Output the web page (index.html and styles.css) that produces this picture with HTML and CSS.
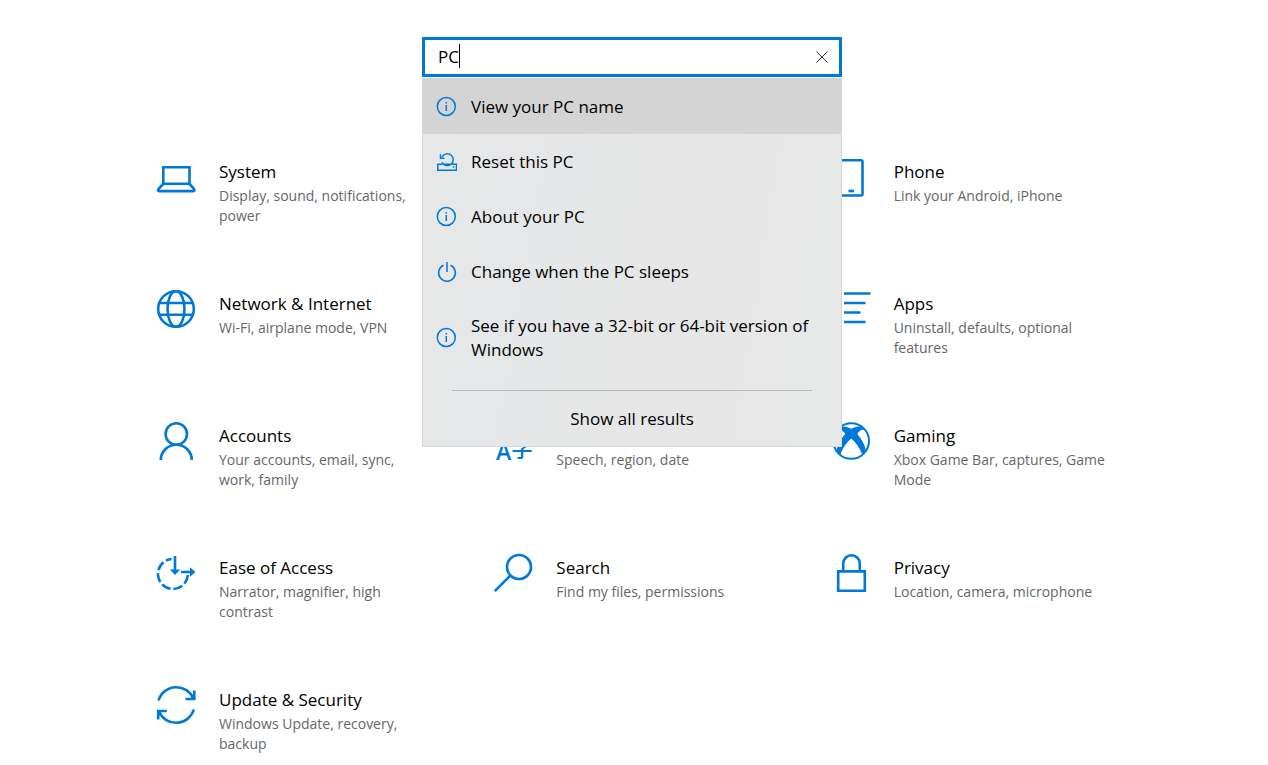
FILE: index.html
```
<!DOCTYPE html>
<html lang="en">
<head>
  <meta charset="UTF-8">
  <meta name="viewport" content="width=device-width, initial-scale=1">
  <title>Settings</title>
  <link rel="stylesheet" href="styles.css">
</head>
<body>

  <!-- shared icon for the info results -->
  <svg class="sprite" aria-hidden="true">
    <symbol id="info" viewBox="0 0 22 22">
      <circle cx="11.300" cy="10.500" r="9"/>
      <path d="M11.300 9v6M11.300 6v1.500"/>
    </symbol>
  </svg>

  <header class="search">
    <form class="search-box" role="search">
      <input class="search-input" type="text" value="PC" aria-label="Find a setting" autocomplete="off">
      <span class="caret"></span>
      <button class="clear" type="reset" aria-label="Clear">
        <svg viewBox="0 0 12 12"><path d="M0.5 0.5l11 11M11.5 0.5l-11 11"/></svg>
      </button>
    </form>

    <div class="results">
      <ul class="result-list">
        <li><button class="result selected" type="button">
          <svg class="result-icon"><use href="#info"/></svg>
          <span>View your PC name</span>
        </button></li>
        <li><button class="result" type="button">
          <svg class="result-icon" viewBox="0 0 22 22">
            <path d="M7.500 13.300H2.800v6h18.700v-6h-4.700M17.800 16h1.500"/>
            <path d="M7 11.200A5.900 5.900 0 1 0 7.200 5.800M5.500 3.300v3.900h4M8.500 13.300h8"/>
          </svg>
          <span>Reset this PC</span>
        </button></li>
        <li><button class="result" type="button">
          <svg class="result-icon"><use href="#info"/></svg>
          <span>About your PC</span>
        </button></li>
        <li><button class="result" type="button">
          <svg class="result-icon" viewBox="0 0 22 22">
            <path d="M8.500 4.200A8.400 8.400 0 1 0 15.500 4.200M12 1v10"/>
          </svg>
          <span>Change when the PC sleeps</span>
        </button></li>
        <li><button class="result" type="button">
          <svg class="result-icon"><use href="#info"/></svg>
          <span>See if you have a 32-bit or 64-bit version of Windows</span>
        </button></li>
      </ul>
      <button class="show-all" type="button">Show all results</button>
    </div>
  </header>

  <main class="categories">
    <a class="tile" href="#system">
      <svg class="icon" viewBox="0 0 38 38">
        <path d="M6.3 26V9.2h26.2V26M6.3 25.8h26.2l4.6 5.4c.8 1 .3 1.9-.8 1.9H2.2c-1.100 0-1.600-.9-.8-1.900z"/>
      </svg>
      <span class="text"><span class="title">System</span><span class="desc">Display, sound, notifications, power</span></span>
    </a>
    <a class="tile" href="#devices">
      <svg class="icon" viewBox="0 0 38 38">
        <path d="M2 10h20v22H2zM6 15h12M28 12h8v20h-8z"/>
      </svg>
      <span class="text"><span class="title">Devices</span><span class="desc">Bluetooth, printers, mouse</span></span>
    </a>
    <a class="tile" href="#phone">
      <svg class="icon" viewBox="0 0 38 38">
        <rect x="8.500" y="2.300" width="22" height="35.200" rx="1.500"/>
        <path d="M16.500 33h5.500"/>
      </svg>
      <span class="text"><span class="title">Phone</span><span class="desc">Link your Android, iPhone</span></span>
    </a>

    <a class="tile" href="#network">
      <svg class="icon" viewBox="0 0 38 38">
        <circle cx="19" cy="19" r="17.800"/>
        <ellipse cx="19" cy="19" rx="8.500" ry="17.800"/>
        <path d="M2.500 13h33M2.500 24.700h33"/>
      </svg>
      <span class="text"><span class="title">Network &amp; Internet</span><span class="desc">Wi-Fi, airplane mode, VPN</span></span>
    </a>
    <a class="tile" href="#personalization">
      <svg class="icon" viewBox="0 0 38 38">
        <path d="M35 3L16 22l-5-5M11 22c-6 0-6 8-10 11 7 3 15 0 15-7z"/>
      </svg>
      <span class="text"><span class="title">Personalization</span><span class="desc">Background, lock screen, colors</span></span>
    </a>
    <a class="tile" href="#apps">
      <svg class="icon" viewBox="0 0 38 38">
        <path d="M12 3.500h26.500M12 13h21.500M12 22.500h16.500M12 32h21.500M4 3.500h4M4 13h4M4 22.500h4M4 32h4"/>
      </svg>
      <span class="text"><span class="title">Apps</span><span class="desc">Uninstall, defaults, optional features</span></span>
    </a>

    <a class="tile" href="#accounts">
      <svg class="icon" viewBox="0 0 38 38">
        <circle cx="19.300" cy="12" r="10.700"/>
        <path d="M3.800 38a15.500 15.200 0 0 1 31 0"/>
      </svg>
      <span class="text"><span class="title">Accounts</span><span class="desc">Your accounts, email, sync, work, family</span></span>
    </a>
    <a class="tile" href="#time">
      <svg class="icon icon-text" viewBox="0 0 38 38">
        <text x="2" y="38" font-size="23">A</text>
        <text class="cjk" x="17" y="34" font-size="22">字</text>
      </svg>
      <span class="text"><span class="title">Time &amp; Language</span><span class="desc">Speech, region, date</span></span>
    </a>
    <a class="tile" href="#gaming">
      <svg class="icon" viewBox="0 0 38 38">
        <circle cx="19.200" cy="19" r="17.800" stroke-width="2"/>
        <path class="solid" d="M7 6C11 3.200 15.500 4.500 19.200 6.800 23 4.500 27.500 3.200 31.500 6L32 8C29.500 7.200 27 9.200 25.300 12 29.500 17 33.500 23.500 34 29.500L30.500 33C28 26.500 24 20.500 19.200 16.500 14.500 20.500 10.500 26.500 8 33L4.500 29.500C5 23.500 9 17 13.200 12 11.500 9.200 9 7.200 6.500 8z"/>
      </svg>
      <span class="text"><span class="title">Gaming</span><span class="desc">Xbox Game Bar, captures, Game Mode</span></span>
    </a>

    <a class="tile" href="#ease">
      <svg class="icon" viewBox="0 0 38 38">
        <path stroke-dasharray="9.500 2.900" d="M30.900 21A15 15 0 1 1 14.500 5"/>
        <path d="M18 2v14M24 18h10"/>
        <path class="solid" d="M12.800 15.500h10.400L18 21zM33 13.200v9.600L38.500 18z"/>
      </svg>
      <span class="text"><span class="title">Ease of Access</span><span class="desc">Narrator, magnifier, high contrast</span></span>
    </a>
    <a class="tile" href="#search">
      <svg class="icon" viewBox="0 0 38 38">
        <circle cx="25" cy="13" r="12"/>
        <path d="M16.500 21.500L.8 37.200"/>
      </svg>
      <span class="text"><span class="title">Search</span><span class="desc">Find my files, permissions</span></span>
    </a>
    <a class="tile" href="#privacy">
      <svg class="icon" viewBox="0 0 38 38">
        <path d="M6.200 17.400h26.600v19.300H6.200zM11.200 17.400V9.600a8.300 8.300 0 0 1 16.600 0v7.800"/>
      </svg>
      <span class="text"><span class="title">Privacy</span><span class="desc">Location, camera, microphone</span></span>
    </a>

    <a class="tile" href="#update">
      <svg class="icon" viewBox="0 0 38 38">
        <path d="M1.500 14.500A18.500 18.500 0 0 1 36.500 13M37.300 4.500V13H28.500"/>
        <path d="M36.800 23.500A18.500 18.500 0 0 1 1.800 25M1.200 33.500V25H9.800"/>
      </svg>
      <span class="text"><span class="title">Update &amp; Security</span><span class="desc">Windows Update, recovery, backup</span></span>
    </a>
  </main>

</body>
</html>
```
FILE: styles.css
```
* {
  box-sizing: border-box;
}

body {
  margin: 0;
  padding: 37px 4px 0 0;
  background-color: #ffffff;
  color: #000000;
  font-family: "Segoe UI", "Open Sans", "Noto Sans", sans-serif;
  font-size: 17px;
  line-height: 24px;
}

button,
input {
  font: inherit;
  color: inherit;
}

button {
  border: none;
  background: none;
  cursor: pointer;
}

svg {
  fill: none;
  stroke: #0078d7;
}

.sprite {
  display: none;
}

/* search */
.search {
  position: relative;
  z-index: 1;
  max-width: 420px;
  margin: 0 auto;
}

.search-box {
  position: relative;
  display: flex;
  align-items: center;
  height: 40px;
  border: 3px solid #0078d7;
  background-color: #ffffff;
}

.search-input {
  flex: 1;
  min-width: 0;
  padding: 0 0 0 13px;
  border: none;
  outline: none;
  background: none;
}

.caret {
  position: absolute;
  left: 34px;
  top: 4px;
  width: 1px;
  height: 24px;
  background-color: #000000;
}

.clear {
  display: flex;
  align-items: center;
  justify-content: center;
  width: 34px;
  height: 34px;
  padding: 0;
}

.clear svg {
  width: 12px;
  height: 12px;
  stroke: #333333;
}

/* results cover the tiles below */
.results {
  position: absolute;
  top: 100%;
  left: 0;
  right: 0;
  margin-top: 1px;
  border: 1px solid #d6d8d8;
  background: linear-gradient(100deg, #e7e8e8 0%, #e5e7e8 25%, #e6e6e6 60%, #e7e8e8 100%);
}

.result-list {
  margin: 0;
  padding: 0;
  list-style: none;
}

.result {
  display: flex;
  align-items: center;
  gap: 14px;
  width: 100%;
  min-height: 55px;
  padding: 15px 12px;
  text-align: left;
}

.result.selected {
  background-color: #d4d4d4;
}

.result-icon {
  flex: none;
  width: 22px;
  height: 22px;
  stroke-width: 1.5;
}

.show-all {
  display: block;
  width: calc(100% - 58px);
  height: 56px;
  margin: 13px auto 0;
  padding: 0;
  border-top: 1px solid #b4b8b7;
  text-align: center;
}

/* categories */
.categories {
  display: grid;
  grid-template-columns: repeat(3, 1fr);
  grid-auto-rows: minmax(72px, auto);
  row-gap: 60px;
  max-width: 1012px;
  margin: 81px auto 0;
}

.tile {
  display: flex;
  align-items: flex-start;
  gap: 24px;
  padding: 0 32px 0 31px;
  color: inherit;
  text-decoration: none;
}

.icon {
  flex: none;
  width: 38px;
  height: 38px;
  overflow: visible;
  stroke-width: 2.6;
}

.icon .solid,
.icon-text {
  fill: #0078d7;
  stroke: none;
}

.icon-text {
  font-weight: 600;
}

.icon-text .cjk {
  font-family: "Noto Sans CJK SC", sans-serif;
  font-weight: 500;
}

.text {
  padding-top: 2px;
}

.title,
.desc {
  display: block;
}

.desc {
  margin-top: 2px;
  color: #666666;
  font-size: 14px;
  line-height: 20px;
}
```
